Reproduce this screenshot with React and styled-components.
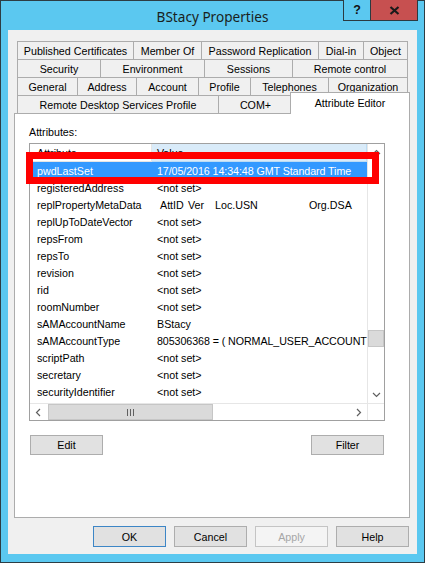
import React from 'react'
import styled, { createGlobalStyle } from 'styled-components'

const GlobalStyle = createGlobalStyle`
  html, body { margin: 0; padding: 0; background: #fff; }
  body {
    font-family: "Liberation Sans", Arial, sans-serif;
    font-size: 10.7px;
    color: #000;
  }
  * { box-sizing: border-box; }
`;

const Window = styled.div`
  width: 425px;
  height: 563px;
  border: 1px solid #2d3d44;
  background: #5bc8f0;
  padding: 0 7px 8px 7px;
  display: flex;
  flex-direction: column;
`;

const TitleBar = styled.div`
  height: 29px;
  display: grid;
  grid-template-columns: 1fr auto 1fr;
  align-items: center;
`;

const Title = styled.div`
  grid-column: 2;
  font-family: "Noto Sans", "Open Sans", sans-serif;
  font-size: 13.6px;
  color: #1a1f20;
  padding-top: 1px;
`;

const Caption = styled.div`
  grid-column: 3;
  justify-self: end;
  align-self: start;
  display: flex;
  margin-top: -1px;
  margin-right: -1px;
`;

const CapButton = styled.div`
  width: ${p => p.w}px;
  height: 21px;
  background: ${p => (p.$close ? '#c75050' : '#5bc8f0')};
  border: 1px solid #2b3a40;
  border-top: none;
  margin-left: ${p => (p.$close ? '-1px' : '0')};
  display: flex;
  align-items: center;
  justify-content: center;
  font-weight: bold;
  font-size: 12.5px;
  color: #111;
`;

const Client = styled.div`
  flex: 1;
  background: #f0f0f0;
  padding: 11px 7px 7px 6px;
  display: flex;
  flex-direction: column;
`;

const TabStrip = styled.div`
  display: flex;
  flex-direction: column;
  margin: 0 2px 0 3px;
`;

const TabRow = styled.div`
  display: flex;
  height: 18px;
  align-items: flex-end;
`;

const Tab = styled.div`
  width: ${p => p.w + (p.$active ? 4 : 0)}px;
  height: ${p => (p.$active ? 22 : 18)}px;
  margin: ${p => (p.$active ? '0 -2px -1px -2px' : '0')};
  position: relative;
  z-index: ${p => (p.$active ? 2 : 0)};
  background: ${p => (p.$active ? '#ffffff' : '#f0f0f0')};
  border-top: 1px solid #acacac;
  border-left: 1px solid #acacac;
  border-right: ${p => (p.$last || p.$active ? '1px solid #acacac' : 'none')};
  display: flex;
  align-items: center;
  justify-content: center;
  white-space: nowrap;
  padding-bottom: ${p => (p.$active ? '2px' : '0')};
`;

const Panel = styled.div`
  flex: 1;
  background: #fff;
  border: 1px solid #acacac;
  padding: 12px 24px 0 14px;
  display: flex;
  flex-direction: column;
`;

const Label = styled.div`
  line-height: 13px;
  margin-bottom: 4px;
`;

const ListBox = styled.div`
  position: relative;
  height: 278px;
  border: 1px solid #a0a0a0;
  display: grid;
  grid-template-columns: 1fr 17px;
  grid-template-rows: 1fr 17px;
`;

const ListContent = styled.div`
  overflow: hidden;
  display: flex;
  flex-direction: column;
`;

const Header = styled.div`
  height: 18px;
  display: flex;
  flex: none;
`;

const HeadCell = styled.div`
  width: ${p => (p.w ? `${p.w}px` : 'auto')};
  flex: ${p => (p.w ? 'none' : '1')};
  background: ${p => (p.$hot ? '#d9ebf9' : '#fff')};
  border-right: 1px solid ${p => (p.$hot ? '#bcdcf4' : '#e5e5e5')};
  border-bottom: 1px solid ${p => (p.$hot ? '#bcdcf4' : '#e5e5e5')};
  padding-left: ${p => (p.w ? 7 : 5)}px;
  display: flex;
  align-items: center;
`;

const Rows = styled.div`
  flex: 1;
  overflow: hidden;
`;

const Row = styled.div`
  height: 17px;
  display: flex;
  align-items: center;
  white-space: nowrap;
  background: ${p => (p.$selected ? '#3399ff' : 'transparent')};
  color: ${p => (p.$selected ? '#fff' : '#000')};
`;

const NameCell = styled.div`
  width: 122px;
  flex: none;
  padding-left: 7px;
`;

const ValueCell = styled.div`
  padding-left: 5px;
  display: flex;
  letter-spacing: ${p => (p.$tight ? '-0.08px' : 'normal')};
`;

const Seg = styled.span`
  display: inline-block;
  width: ${p => p.w}px;
  padding-left: ${p => p.pad || 0}px;
`;

const VScroll = styled.div`
  background: #fff;
  border-left: 1px solid #e6e6e6;
  display: flex;
  flex-direction: column;
`;

const HScroll = styled.div`
  background: #fff;
  border-top: 1px solid #e6e6e6;
  display: flex;
`;

const Arrow = styled.div`
  width: 17px;
  height: 17px;
  flex: none;
  display: flex;
  align-items: center;
  justify-content: center;
`;

const Track = styled.div`
  flex: 1;
  display: flex;
  flex-direction: ${p => (p.$vertical ? 'column' : 'row')};
`;

const VThumb = styled.div`
  height: 17px;
  background: #dadada;
  border: 1px solid #c6c6c6;
`;

const HThumb = styled.div`
  width: 165px;
  margin-left: 1px;
  background: #dadada;
  border: 1px solid #c6c6c6;
  display: flex;
  align-items: center;
  justify-content: center;
`;

const Corner = styled.div`
  background: #fff;
  border-top: 1px solid #e6e6e6;
  border-left: 1px solid #e6e6e6;
`;

const Highlight = styled.div`
  position: absolute;
  left: -4px;
  top: 8px;
  width: 353px;
  height: 32px;
  border: 7px solid #ff0000;
  z-index: 3;
  pointer-events: none;
`;

const ActionRow = styled.div`
  display: flex;
  justify-content: space-between;
  margin-top: 14px;
  padding: 0 1px;
`;

const Button = styled.div`
  width: 73px;
  height: ${p => p.h || 21}px;
  background: ${p => (p.$disabled ? '#f4f4f4' : '#e1e1e1')};
  border: 1px solid ${p => (p.$default ? '#3d86c6' : p.$disabled ? '#c4c4c4' : '#adadad')};
  color: ${p => (p.$disabled ? '#a6a6a6' : '#000')};
  display: flex;
  align-items: center;
  justify-content: center;
`;

const DialogButtons = styled.div`
  display: flex;
  justify-content: flex-end;
  gap: 8px;
  margin-top: 8px;
  padding-right: 1px;
`;

const Chevron = ({ dir }) => {
  const paths = {
    up: 'M1 5 L4.5 1.5 L8 5',
    down: 'M1 2 L4.5 5.5 L8 2',
    left: 'M5 1 L1.5 4.5 L5 8',
    right: 'M2 1 L5.5 4.5 L2 8',
  };
  const vertical = dir === 'up' || dir === 'down';
  return (
    <svg width={vertical ? 9 : 7} height={vertical ? 7 : 9} viewBox={vertical ? '0 0 9 7' : '0 0 7 9'}>
      <path d={paths[dir]} fill="none" stroke="#606060" strokeWidth="1.2" />
    </svg>
  );
};

const Grip = () => (
  <svg width="9" height="7" viewBox="0 0 9 7">
    <rect x="1" y="0" width="1" height="7" fill="#606060" />
    <rect x="4" y="0" width="1" height="7" fill="#606060" />
    <rect x="7" y="0" width="1" height="7" fill="#606060" />
  </svg>
);

const CloseGlyph = () => (
  <svg width="11" height="9" viewBox="0 0 11 9">
    <path d="M1.5 1 L9.5 8 M9.5 1 L1.5 8" stroke="#1a1a1a" strokeWidth="2.2" />
  </svg>
);

const tabRows = [
  [['Published Certificates', 116], ['Member Of', 68], ['Password Replication', 117], ['Dial-in', 45], ['Object', 45]],
  [['Security', 83], ['Environment', 104], ['Sessions', 88], ['Remote control', 116]],
  [['General', 60], ['Address', 59], ['Account', 62], ['Profile', 52], ['Telephones', 78], ['Organization', 80]],
  [['Remote Desktop Services Profile', 201], ['COM+', 74], ['Attribute Editor', 116, true]],
];

const attributes = [
  ['pwdLastSet', '17/05/2016 14:34:48 GMT Standard Time', true],
  ['registeredAddress', '<not set>'],
  ['replPropertyMetaData', 'meta'],
  ['replUpToDateVector', '<not set>'],
  ['repsFrom', '<not set>'],
  ['repsTo', '<not set>'],
  ['revision', '<not set>'],
  ['rid', '<not set>'],
  ['roomNumber', '<not set>'],
  ['sAMAccountName', 'BStacy'],
  ['sAMAccountType', '805306368 = ( NORMAL_USER_ACCOUNT'],
  ['scriptPath', '<not set>'],
  ['secretary', '<not set>'],
  ['securityIdentifier', '<not set>'],
];

const App = () => {
  return (
    <>
      <GlobalStyle />
      <Window>
        <TitleBar>
          <Title>BStacy Properties</Title>
          <Caption>
            <CapButton w={28}>?</CapButton>
            <CapButton w={48} $close>
              <CloseGlyph />
            </CapButton>
          </Caption>
        </TitleBar>
        <Client>
          <TabStrip>
            {tabRows.map((row, i) => (
              <TabRow key={i}>
                {row.map(([label, w, active], j) => (
                  <Tab key={label} w={w} $active={active} $last={j === row.length - 1}>
                    {label}
                  </Tab>
                ))}
              </TabRow>
            ))}
          </TabStrip>
          <Panel>
            <Label>Attributes:</Label>
            <ListBox>
              <ListContent>
                <Header>
                  <HeadCell w={122}>Attribute</HeadCell>
                  <HeadCell $hot>Value</HeadCell>
                </Header>
                <Rows>
                  {attributes.map(([name, value, selected]) => (
                    <Row key={name} $selected={selected}>
                      <NameCell>{name}</NameCell>
                      <ValueCell $tight={value.length > 30}>
                        {value === 'meta' ? (
                          <>
                            <Seg w={31} pad={3}>AttID</Seg>
                            <Seg w={27}>Ver</Seg>
                            <Seg w={94}>Loc.USN</Seg>
                            <Seg w={60}>Org.DSA</Seg>
                          </>
                        ) : (
                          value
                        )}
                      </ValueCell>
                    </Row>
                  ))}
                </Rows>
              </ListContent>
              <VScroll>
                <Arrow><Chevron dir="up" /></Arrow>
                <Track $vertical>
                  <VThumb style={{ marginTop: 169 }} />
                </Track>
                <Arrow><Chevron dir="down" /></Arrow>
              </VScroll>
              <HScroll>
                <Arrow><Chevron dir="left" /></Arrow>
                <Track>
                  <HThumb><Grip /></HThumb>
                </Track>
                <Arrow><Chevron dir="right" /></Arrow>
              </HScroll>
              <Corner />
              <Highlight />
            </ListBox>
            <ActionRow>
              <Button h={20}>Edit</Button>
              <Button h={20}>Filter</Button>
            </ActionRow>
          </Panel>
          <DialogButtons>
            <Button $default>OK</Button>
            <Button>Cancel</Button>
            <Button $disabled>Apply</Button>
            <Button>Help</Button>
          </DialogButtons>
        </Client>
      </Window>
    </>
  );
};

export default App
